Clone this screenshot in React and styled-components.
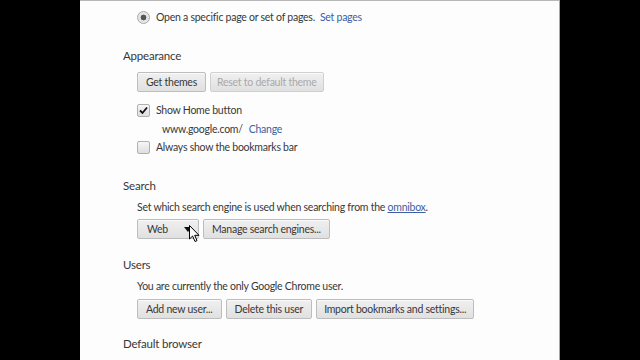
import React from "react";
import styled, { createGlobalStyle } from "styled-components";

const GlobalStyle = createGlobalStyle`
  html, body {
    margin: 0;
    padding: 0;
    background: #000000;
  }
  body {
    font-family: Lato, "Open Sans", sans-serif;
    font-size: 10.5px;
    letter-spacing: -0.25px;
    color: #383838;
  }
`;

const Screen = styled.div`
  width: 640px;
  height: 360px;
  display: flex;
  justify-content: center;
  background: #000000;
  overflow: hidden;
`;

const Page = styled.div`
  width: 480px;
  height: 360px;
  box-sizing: border-box;
  background: #fdfdfd;
  border-top: 1px solid #b8b8b8;
  border-right: 1px solid #a8a8a8;
  padding: 6px 0 0 43px;
`;

const Section = styled.section`
  margin-top: ${(p) => p.$top || 0}px;
`;

const Heading = styled.h3`
  margin: 0;
  height: 18px;
  line-height: 18px;
  font-size: 11.5px;
  letter-spacing: -0.2px;
  font-weight: 400;
  color: #383838;
`;

const Body = styled.div`
  padding-left: 14px;
  display: flex;
  flex-direction: column;
`;

const Row = styled.div`
  display: flex;
  align-items: center;
  gap: ${(p) => p.$gap || 6}px;
  height: ${(p) => p.$h || 18}px;
  margin-top: ${(p) => p.$top || 0}px;
  padding-left: ${(p) => p.$indent || 0}px;
  white-space: nowrap;
`;

const Link = styled.a`
  color: #3b5fa3;
  text-decoration: ${(p) => (p.$underline ? "underline" : "none")};
  margin-left: ${(p) => p.$gap || 0}px;
`;

const ButtonRow = styled.div`
  display: flex;
  gap: 4px;
  margin-top: ${(p) => p.$top || 0}px;
  position: relative;
`;

const Button = styled.button`
  height: 20px;
  padding: 0 ${(p) => p.$pad || 8}px;
  font-family: inherit;
  font-size: 10.5px;
  letter-spacing: -0.25px;
  color: ${(p) => (p.disabled ? "#a9a9a9" : "#383838")};
  background: linear-gradient(#f0f0f0, #e0e0e0);
  border: 1px solid ${(p) => (p.disabled ? "#d0d0d0" : "#bdbdbd")};
  border-radius: 2px;
  box-shadow: inset 0 1px 0 #fafafa;
  white-space: nowrap;
`;

const Select = styled(Button)`
  width: 62px;
  display: flex;
  align-items: center;
  justify-content: space-between;
  padding: 0 6px 0 9px;
`;

const Arrow = styled.span`
  width: 0;
  height: 0;
  border-left: 4px solid transparent;
  border-right: 4px solid transparent;
  border-top: 5px solid #111111;
`;

const Radio = styled.span`
  width: 11px;
  height: 11px;
  border-radius: 50%;
  border: 1px solid #a8a8a8;
  background: radial-gradient(circle, #555 0 2.6px, #e6e6e6 3.2px);
  flex: none;
`;

const Check = styled.span`
  width: 11px;
  height: 11px;
  border: 1px solid #b0b0b0;
  border-radius: 2px;
  background: linear-gradient(#f6f6f6, #dedede);
  display: flex;
  align-items: center;
  justify-content: center;
  flex: none;
`;

const Cursor = styled.svg`
  position: absolute;
  left: 52px;
  top: 6px;
`;

export default function App() {
  return (
    <>
      <GlobalStyle />
      <Screen>
        <Page>
          <Body>
            <Row $h={20}>
              <Radio />
              <span>
                Open a specific page or set of pages.
                <Link $gap={5}>Set pages</Link>
              </span>
            </Row>
          </Body>

          <Section $top={20}>
            <Heading>Appearance</Heading>
            <Body>
              <ButtonRow $top={7}>
                <Button>Get themes</Button>
                <Button disabled $pad={6}>Reset to default theme</Button>
              </ButtonRow>
              <Row $top={9}>
                <Check>
                  <svg width="9" height="9" viewBox="0 0 9 9">
                    <path d="M1 4.5 L3.5 7 L8 1.5" fill="none" stroke="#111" strokeWidth="1.8" />
                  </svg>
                </Check>
                <span>Show Home button</span>
              </Row>
              <Row $top={1} $indent={25}>
                <span>
                  www.google.com/
                  <Link $gap={6}>Change</Link>
                </span>
              </Row>
              <Row>
                <Check />
                <span>Always show the bookmarks bar</span>
              </Row>
            </Body>
          </Section>

          <Section $top={21}>
            <Heading>Search</Heading>
            <Body>
              <Row $top={3}>
                <span>
                  Set which search engine is used when searching from the{" "}
                  <Link $underline>omnibox</Link>.
                </span>
              </Row>
              <ButtonRow $top={3}>
                <Select>
                  <span>Web</span>
                  <Arrow />
                </Select>
                <Button>Manage search engines...</Button>
                <Cursor width="12" height="18" viewBox="0 0 12 18">
                  <path
                    d="M0.5 0.5 L0.5 14 L3.6 11 L6 16.5 L8 15.6 L5.7 10.3 L10 10.3 Z"
                    fill="#ffffff"
                    stroke="#000000"
                    strokeWidth="1"
                  />
                </Cursor>
              </ButtonRow>
            </Body>
          </Section>

          <Section $top={17}>
            <Heading>Users</Heading>
            <Body>
              <Row $top={3}>
                <span>You are currently the only Google Chrome user.</span>
              </Row>
              <ButtonRow $top={4}>
                <Button>Add new user...</Button>
                <Button>Delete this user</Button>
                <Button $pad={7}>Import bookmarks and settings...</Button>
              </ButtonRow>
            </Body>
          </Section>

          <Section $top={16}>
            <Heading>Default browser</Heading>
          </Section>
        </Page>
      </Screen>
    </>
  );
}
